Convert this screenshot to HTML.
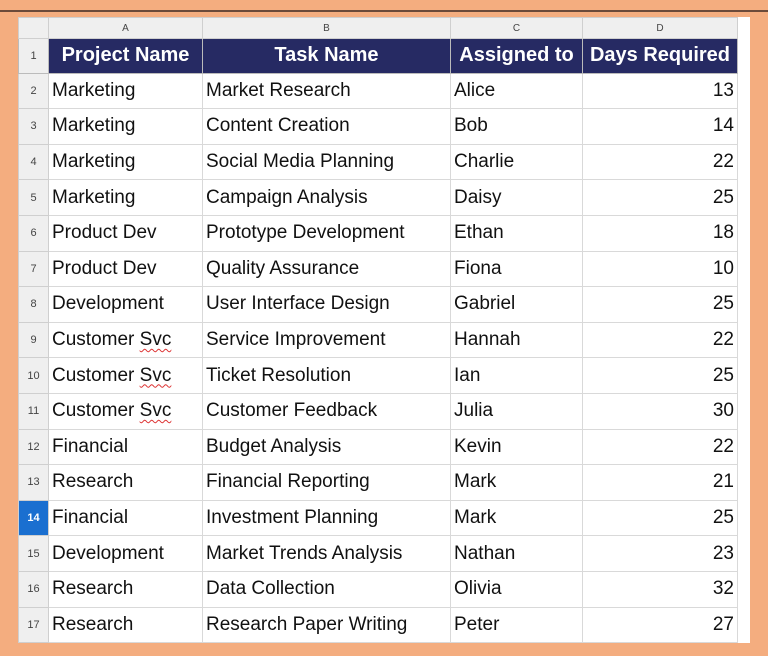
<!DOCTYPE html>
<html><head><style>
body{margin:0;width:768px;height:656px;background:#f4ad7f;position:relative;overflow:hidden;font-family:"Liberation Sans",Arial,sans-serif}
.line{position:absolute;left:0;top:10px;width:768px;height:2px;background:#6b4a3a}
.sheet{position:absolute;left:18px;top:17px;width:732px;height:626px;background:#fff}
table{position:absolute;left:0;top:0;border-collapse:collapse;table-layout:fixed}
td{border:1px solid #d9d9d9;padding:0 3px;white-space:nowrap;overflow:hidden;font-size:19px;color:#111;height:34.6px}
tr.ch td{height:20px;background:#efefef;font-size:10px;color:#444;text-align:center;border-color:#cfcfcf}
td.rh{background:#efefef;font-size:11px;color:#444;text-align:center;padding:0;border-color:#cfcfcf}
tr.h td{background:#262a63;color:#fff;font-weight:bold;font-size:20px;text-align:center;border-color:#bbb;height:33.6px}
tr.h td.rh{background:#efefef;color:#444;font-weight:normal;font-size:11px}
td.n{text-align:right}
td.sel{background:#1a6fd0;color:#fff;font-weight:bold}
.sq{text-decoration:underline wavy #d33;text-decoration-thickness:1px;text-underline-offset:3px}
</style></head><body>
<div class="line"></div>
<div class="sheet">
<table>
<colgroup><col style="width:30px"><col style="width:154px"><col style="width:248px"><col style="width:132px"><col style="width:155px"></colgroup>
<tr class="ch"><td></td><td>A</td><td>B</td><td>C</td><td>D</td></tr>
<tr class="h"><td class="rh">1</td><td>Project Name</td><td>Task Name</td><td>Assigned to</td><td>Days Required</td></tr>
<tr><td class="rh">2</td><td>Marketing</td><td>Market Research</td><td>Alice</td><td class="n">13</td></tr>
<tr><td class="rh">3</td><td>Marketing</td><td>Content Creation</td><td>Bob</td><td class="n">14</td></tr>
<tr><td class="rh">4</td><td>Marketing</td><td>Social Media Planning</td><td>Charlie</td><td class="n">22</td></tr>
<tr><td class="rh">5</td><td>Marketing</td><td>Campaign Analysis</td><td>Daisy</td><td class="n">25</td></tr>
<tr><td class="rh">6</td><td>Product Dev</td><td>Prototype Development</td><td>Ethan</td><td class="n">18</td></tr>
<tr><td class="rh">7</td><td>Product Dev</td><td>Quality Assurance</td><td>Fiona</td><td class="n">10</td></tr>
<tr><td class="rh">8</td><td>Development</td><td>User Interface Design</td><td>Gabriel</td><td class="n">25</td></tr>
<tr><td class="rh">9</td><td>Customer <span class="sq">Svc</span></td><td>Service Improvement</td><td>Hannah</td><td class="n">22</td></tr>
<tr><td class="rh">10</td><td>Customer <span class="sq">Svc</span></td><td>Ticket Resolution</td><td>Ian</td><td class="n">25</td></tr>
<tr><td class="rh">11</td><td>Customer <span class="sq">Svc</span></td><td>Customer Feedback</td><td>Julia</td><td class="n">30</td></tr>
<tr><td class="rh">12</td><td>Financial</td><td>Budget Analysis</td><td>Kevin</td><td class="n">22</td></tr>
<tr><td class="rh">13</td><td>Research</td><td>Financial Reporting</td><td>Mark</td><td class="n">21</td></tr>
<tr><td class="rh sel">14</td><td>Financial</td><td>Investment Planning</td><td>Mark</td><td class="n">25</td></tr>
<tr><td class="rh">15</td><td>Development</td><td>Market Trends Analysis</td><td>Nathan</td><td class="n">23</td></tr>
<tr><td class="rh">16</td><td>Research</td><td>Data Collection</td><td>Olivia</td><td class="n">32</td></tr>
<tr><td class="rh">17</td><td>Research</td><td>Research Paper Writing</td><td>Peter</td><td class="n">27</td></tr>
</table>
</div>
</body></html>
